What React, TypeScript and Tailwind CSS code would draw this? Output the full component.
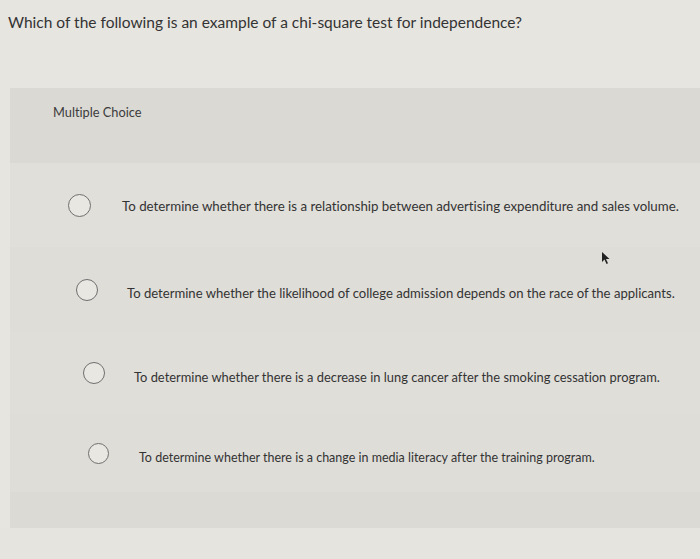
import React from "react";

const options = [
  { text: "To determine whether there is a relationship between advertising expenditure and sales volume.", h: "h-[84px]", pl: "pl-[58px]", gap: "gap-[31px]", bg: "bg-[#e1dfda]", fs: "text-[13.3px]", r: "w-[23px] h-[23px]", pt: "pt-[2px]" },
  { text: "To determine whether the likelihood of college admission depends on the race of the applicants.", h: "h-[85px]", pl: "pl-[66px]", gap: "gap-[29px]", bg: "bg-[#dfddd8]", fs: "text-[13.1px]", r: "w-[22px] h-[22px]", pt: "pt-[6px]" },
  { text: "To determine whether there is a decrease in lung cancer after the smoking cessation program.", h: "h-[82px]", pl: "pl-[73px]", gap: "gap-[29px]", bg: "bg-[#e0ded9]", fs: "text-[12.9px]", r: "w-[22px] h-[22px]", pt: "pt-[8px]" },
  { text: "To determine whether there is a change in media literacy after the training program.", h: "h-[78px]", pl: "pl-[78px]", gap: "gap-[30px]", bg: "bg-[#dfddd8]", fs: "text-[12.5px]", r: "w-[21px] h-[21px]", pt: "pt-[10px]" },
];

export default function App() {
  return (
    <div className="relative w-[700px] h-[559px] overflow-hidden bg-[#e7e5e0] text-[#3a3a3a] [font-variant-ligatures:none]" style={{ fontFamily: "Lato, 'Open Sans', sans-serif" }}>
      <div className="h-[88px] pl-[8px] pt-[13px]">
        <p className="text-[15.5px] leading-[18px] text-[#333]">Which of the following is an example of a chi-square test for independence?</p>
      </div>
      <div className="ml-[10px] h-[440px] bg-[#dbd9d4] flex flex-col">
        <div className="h-[75px] pl-[43px] pt-[16px]">
          <p className="text-[12.8px] leading-[17px] text-[#3c3c3c]">Multiple Choice</p>
        </div>
        {options.map((o, i) => (
          <div key={i} className={`${o.h} ${o.pl} ${o.gap} ${o.bg} flex items-center`}>
            <div className={`${o.r} shrink-0 rounded-full border-[1.5px] border-[#6f6f6f] bg-[#e9e7e2]`} />
            <p className={`${o.fs} ${o.pt} leading-[16px] text-[#333]`}>{o.text}</p>
          </div>
        ))}
        <div className="flex-1 bg-[#dcdad5]" />
      </div>
      <div className="h-[31px] bg-[#e6e4df]" />
      <svg className="absolute left-[601px] top-[251px]" width="10" height="14" viewBox="0 0 10 14">
        <path d="M1 1 L1 11 L3.5 8.5 L5.5 13 L7 12.3 L5 8 L8.5 8 Z" fill="#222" />
      </svg>
    </div>
  );
}
